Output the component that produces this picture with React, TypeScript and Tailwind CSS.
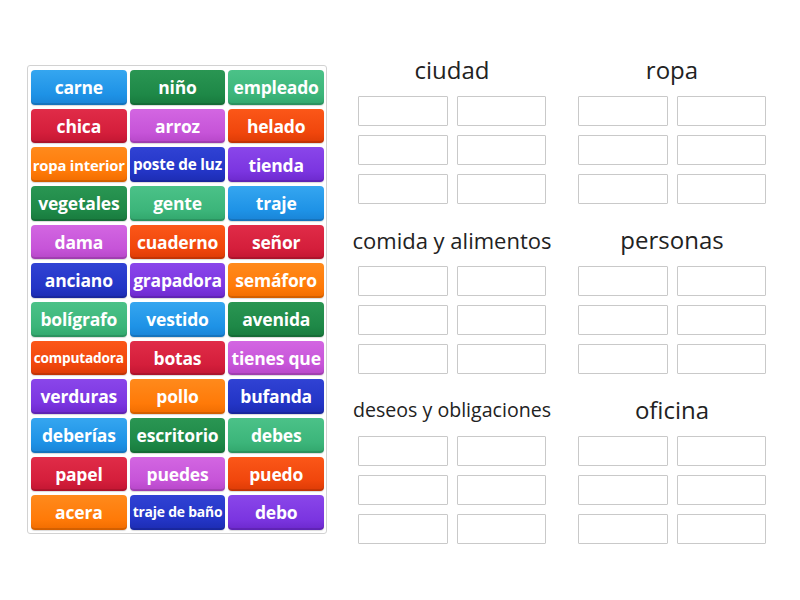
import React from 'react';

type Tone = 'sky' | 'green' | 'teal' | 'red' | 'pink' | 'flame' | 'orange' | 'navy' | 'violet';

interface Tile {
  word: string;
  tone: Tone;
  size?: string;
}

// gradient + bottom edge per colour
const toneClasses: Record<Tone, string> = {
  sky: 'bg-[linear-gradient(#35a6f0,#1e92e6_70%,#1983d6)]',
  green: 'bg-[linear-gradient(#2a9653,#1e8847_70%,#187a3d)]',
  teal: 'bg-[linear-gradient(#4bc288,#3cb57a_70%,#31a66c)]',
  red: 'bg-[linear-gradient(#e02c48,#d41e3b_70%,#c21632)]',
  pink: 'bg-[linear-gradient(#d366e2,#c654d8_70%,#b646c8)]',
  flame: 'bg-[linear-gradient(#fb5718,#f0460c_70%,#dc3b06)]',
  orange: 'bg-[linear-gradient(#ff8a1c,#ff7a08_70%,#f06c00)]',
  navy: 'bg-[linear-gradient(#3042d4,#2335c6_70%,#1c2cb2)]',
  violet: 'bg-[linear-gradient(#8a46ea,#7b35e0_70%,#6c28cc)]',
};

const tiles: Tile[] = [
  { word: 'carne', tone: 'sky' },
  { word: 'niño', tone: 'green' },
  { word: 'empleado', tone: 'teal' },
  { word: 'chica', tone: 'red' },
  { word: 'arroz', tone: 'pink' },
  { word: 'helado', tone: 'flame' },
  { word: 'ropa interior', tone: 'orange', size: 'text-[14.8px]' },
  { word: 'poste de luz', tone: 'navy', size: 'text-[15.3px]' },
  { word: 'tienda', tone: 'violet' },
  { word: 'vegetales', tone: 'green' },
  { word: 'gente', tone: 'teal' },
  { word: 'traje', tone: 'sky' },
  { word: 'dama', tone: 'pink' },
  { word: 'cuaderno', tone: 'flame' },
  { word: 'señor', tone: 'red' },
  { word: 'anciano', tone: 'navy' },
  { word: 'grapadora', tone: 'violet' },
  { word: 'semáforo', tone: 'orange' },
  { word: 'bolígrafo', tone: 'teal' },
  { word: 'vestido', tone: 'sky' },
  { word: 'avenida', tone: 'green' },
  { word: 'computadora', tone: 'flame', size: 'text-[13.7px]' },
  { word: 'botas', tone: 'red' },
  { word: 'tienes que', tone: 'pink' },
  { word: 'verduras', tone: 'violet' },
  { word: 'pollo', tone: 'orange' },
  { word: 'bufanda', tone: 'navy' },
  { word: 'deberías', tone: 'sky' },
  { word: 'escritorio', tone: 'green' },
  { word: 'debes', tone: 'teal' },
  { word: 'papel', tone: 'red' },
  { word: 'puedes', tone: 'pink' },
  { word: 'puedo', tone: 'flame' },
  { word: 'acera', tone: 'orange' },
  { word: 'traje de baño', tone: 'navy', size: 'text-[13.9px]' },
  { word: 'debo', tone: 'violet' },
];

interface Group {
  title: string;
  size: string;
}

const leftGroups: Group[] = [
  { title: 'ciudad', size: 'text-[24px]' },
  { title: 'comida y alimentos', size: 'text-[22px]' },
  { title: 'deseos y obligaciones', size: 'text-[19.6px]' },
];

const rightGroups: Group[] = [
  { title: 'ropa', size: 'text-[24px]' },
  { title: 'personas', size: 'text-[24px]' },
  { title: 'oficina', size: 'text-[24px]' },
];

const DropGroup: React.FC<{ group: Group }> = ({ group }) => (
  <div className="flex flex-col">
    <div className={`h-[48px] flex items-center justify-center whitespace-nowrap text-[#222] ${group.size}`}>
      {group.title}
    </div>
    <div className="mt-[2px] grid grid-cols-2 gap-x-[9px] gap-y-[9px]">
      {Array.from({ length: 6 }).map((_, i) => (
        <div key={i} className="h-[30px] border border-[#c9c9c9] rounded-[1px] bg-white" />
      ))}
    </div>
  </div>
);

const App: React.FC = () => {
  return (
    <div className="w-[800px] h-[600px] bg-white overflow-hidden font-['Open_Sans',sans-serif]">
      <div className="flex pl-[27px] pt-[46px]">
        {/* tile pool */}
        <div className="mt-[19px] w-[300px] h-[469px] border border-[#d2d2d2] rounded-[3px] pl-[3px] pr-[2px] pt-[4px]">
          <div className="grid grid-cols-3 gap-x-[3px] gap-y-[4px]">
            {tiles.map((t) => (
              <div
                key={t.word}
                className={`h-[34.67px] rounded-[4px] flex items-center justify-center text-white font-bold whitespace-nowrap tracking-[-0.2px] shadow-[inset_0_-2px_0_rgba(0,0,0,0.12),0_1px_1px_rgba(0,0,0,0.15)] ${toneClasses[t.tone]} ${t.size ?? 'text-[17.5px]'}`}
              >
                {t.word}
              </div>
            ))}
          </div>
        </div>

        {/* category columns */}
        <div className="ml-[31px] w-[188px] flex flex-col gap-[12px]">
          {leftGroups.map((g) => (
            <DropGroup key={g.title} group={g} />
          ))}
        </div>
        <div className="ml-[32px] w-[188px] flex flex-col gap-[12px]">
          {rightGroups.map((g) => (
            <DropGroup key={g.title} group={g} />
          ))}
        </div>
      </div>
    </div>
  );
};

export default App;
